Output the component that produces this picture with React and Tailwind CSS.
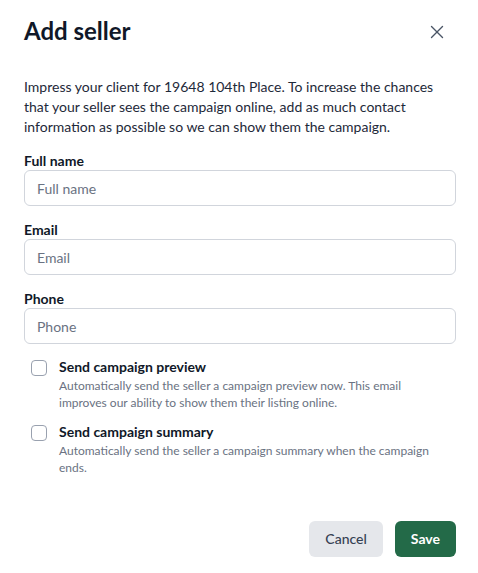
import { X } from "lucide-react";

function Field({ label, placeholder, type = "text" }) {
  return (
    <div className="flex flex-col">
      <label className="text-sm font-bold text-gray-900 leading-5">{label}</label>
      <input
        type={type}
        placeholder={placeholder}
        className="mt-[-1px] h-9 w-full rounded-md border border-gray-300 bg-white px-3 text-sm text-gray-900 placeholder:text-gray-500 outline-none"
      />
    </div>
  );
}

function CheckRow({ title, text }) {
  return (
    <div className="flex items-start gap-3 pl-[7px]">
      <input
        type="checkbox"
        className="mt-[3px] h-4 w-4 shrink-0 appearance-none rounded border border-gray-400 bg-white"
      />
      <div className="w-[380px]">
        <p className="text-sm font-bold text-gray-900 leading-5">{title}</p>
        <p className="text-xs text-gray-500 leading-[17px]">{text}</p>
      </div>
    </div>
  );
}

export default function App() {
  return (
    <div
      className="w-[478px] h-[573px] bg-white pl-6 pr-[22px] pt-4 pb-4 flex flex-col"
      style={{ fontFamily: 'Lato, "Noto Sans", sans-serif' }}
    >
      {/* Header */}
      <div className="flex items-center justify-between">
        <h2 className="text-[24px] font-bold text-gray-900 leading-8 -mt-[1px]">Add seller</h2>
        <button className="mr-[8px] text-gray-600">
          <X size={22} strokeWidth={1.5} />
        </button>
      </div>

      <p className="mt-[30px] text-sm text-gray-800 leading-5">
        Impress your client for 19648 104th Place. To increase the chances that your seller sees
        the campaign online, add as much contact information as possible so we can show them the
        campaign.
      </p>

      {/* Fields */}
      <div className="mt-[14px] flex flex-col gap-[14px]">
        <Field label="Full name" placeholder="Full name" />
        <Field label="Email" placeholder="Email" type="email" />
        <Field label="Phone" placeholder="Phone" type="tel" />
      </div>

      <div className="mt-[13px] flex flex-col gap-[11px]">
        <CheckRow
          title="Send campaign preview"
          text="Automatically send the seller a campaign preview now. This email improves our ability to show them their listing online."
        />
        <CheckRow
          title="Send campaign summary"
          text="Automatically send the seller a campaign summary when the campaign ends."
        />
      </div>

      {/* Footer */}
      <div className="mt-auto flex justify-end gap-3">
        <button className="h-9 rounded-md bg-gray-200 px-4 text-sm font-medium text-gray-700">
          Cancel
        </button>
        <button className="h-9 rounded-md bg-[#236a48] px-4 text-sm font-bold text-white">
          Save
        </button>
      </div>
    </div>
  );
}
